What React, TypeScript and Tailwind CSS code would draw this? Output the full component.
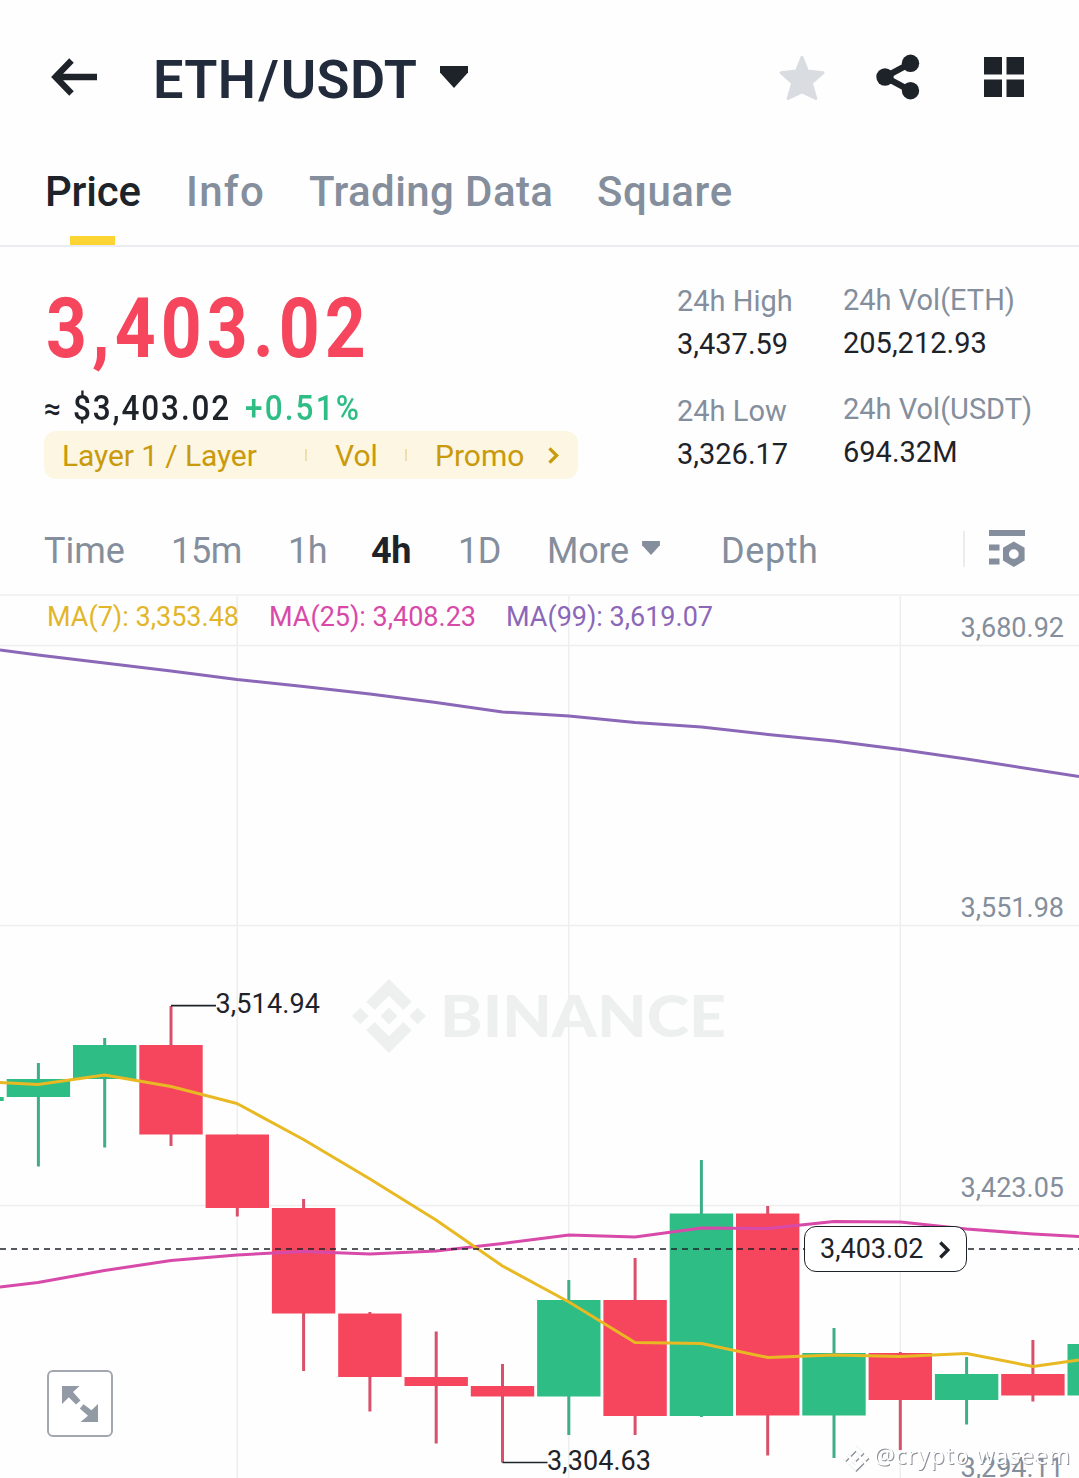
import React from "react";

const UP = "#2ebd85";
const DOWN = "#f6465d";
const STEP = 66.3;
const FIRST_X = 38.4;

type Candle = { up: boolean; high: number; top: number; bottom: number; low: number };

const candles: Candle[] = [
  { up: true, high: 1063, top: 1079, bottom: 1097, low: 1166.5 },
  { up: true, high: 1038, top: 1045, bottom: 1079, low: 1147.5 },
  { up: false, high: 1006, top: 1045, bottom: 1134.5, low: 1146 },
  { up: false, high: 1134.5, top: 1134.5, bottom: 1208, low: 1216.5 },
  { up: false, high: 1199, top: 1208, bottom: 1313.5, low: 1371 },
  { up: false, high: 1312, top: 1313.5, bottom: 1377, low: 1411.5 },
  { up: false, high: 1331.5, top: 1377, bottom: 1386, low: 1443.5 },
  { up: false, high: 1364, top: 1386, bottom: 1396.5, low: 1462.5 },
  { up: true, high: 1280, top: 1300, bottom: 1396.5, low: 1435 },
  { up: false, high: 1258, top: 1300, bottom: 1416, low: 1435 },
  { up: true, high: 1160, top: 1213.5, bottom: 1416, low: 1417 },
  { up: false, high: 1206, top: 1213.5, bottom: 1415.5, low: 1455.5 },
  { up: true, high: 1328, top: 1353, bottom: 1415.5, low: 1458 },
  { up: false, high: 1352, top: 1353, bottom: 1400, low: 1450 },
  { up: true, high: 1357, top: 1374, bottom: 1400, low: 1424.5 },
  { up: false, high: 1340, top: 1374, bottom: 1395.5, low: 1401.5 },
  { up: true, high: 1344, top: 1344, bottom: 1395.5, low: 1395.5 },
];

const ma7 =
  "0,1082.5 38,1084.5 104.5,1075 171,1086.5 237,1103.5 303.5,1139.5 370,1179 436,1220 502.5,1266 569,1302 635,1342.5 701.5,1343.5 768,1357.5 834,1355 900.5,1356.5 966.5,1353.5 1033,1366.5 1079,1360";
const ma25 =
  "0,1287 38,1282.5 104.5,1270.5 171,1260.5 237,1255 303.5,1251.5 370,1254 436,1251 502.5,1243.5 569,1235 635,1237 701.5,1228 768,1228.5 834,1221.5 900.5,1222 966.5,1229 1033,1234 1079,1236.5";
const ma99 =
  "0,650 38,655 104.5,663 171,671 237,679.5 303.5,686.5 370,694 436,702.5 502.5,712 569,716 635,722.5 701.5,727 768,734.5 834,741 900.5,749.5 966.5,759 1079,776.5";

function BinanceMark({ className }: { className?: string }) {
  return (
    <svg viewBox="0 0 126.6 126.6" className={className} fill="currentColor">
      <path d="M38.7 53.2 63.3 28.6l24.6 24.6 14.3-14.3L63.3 0 24.4 38.9zM0 63.3 14.3 49l14.3 14.3-14.3 14.3zM38.7 73.4 63.3 98l24.6-24.6 14.3 14.3-38.9 38.9-38.9-38.9zM98 63.3 112.3 49l14.3 14.3-14.3 14.3zM77.8 63.3 63.3 77.8 48.8 63.3l14.5-14.5z" />
    </svg>
  );
}

function Chevron({ className }: { className?: string }) {
  return (
    <svg viewBox="0 0 10 16" className={className} fill="none" stroke="currentColor" strokeWidth="3">
      <path d="M1.2 1.2 8 8l-6.8 6.8" />
    </svg>
  );
}

function Caret({ className }: { className?: string }) {
  return (
    <svg viewBox="0 0 28 22" className={className} fill="currentColor">
      <path d="M0 0h28v6.5L14 22 0 6.5z" />
    </svg>
  );
}

function Header() {
  return (
    <header className="flex h-[156px] items-center pb-[2px] text-[#1e2329]">
      <svg viewBox="0 0 46 38" className="ml-[51px] h-[38px] w-[46px]" fill="none" stroke="currentColor" strokeWidth="6.3">
        <path d="M20.5 2.5 4.5 19l16 16.5M4.500 19H46" />
      </svg>
      <h1 className="ml-[56px] mt-[5px] w-[287px] whitespace-nowrap text-[54px] font-semibold leading-none text-[#222b3b]">
        <span className="tracking-[0.3px]">ETH</span>
        <span className="mx-[2px]">/</span>
        <span className="tracking-[0.3px]">USDT</span>
      </h1>
      <Caret className="h-[22px] w-[28px]" />
      <svg viewBox="0 0 46 46" className="ml-[311px] mt-[2px] h-[46px] w-[46px] text-[#d9dce1]" fill="currentColor" stroke="currentColor" strokeWidth="3" strokeLinejoin="round">
        <path d="M23 2.200 28.500 16l15.500 1.700L32.300 28 36.800 43.500 23 37 9.200 43.500 13.700 28 2 17.700 17.500 16z" />
      </svg>
      <svg viewBox="0 0 44 46" className="ml-[51px] h-[46px] w-[44px]" fill="currentColor">
        <path d="M9 23 34 9.500M9 23l25 13.500" stroke="currentColor" strokeWidth="6.500" />
        <circle cx="9" cy="23" r="8.700" />
        <circle cx="34.500" cy="9.300" r="8.700" />
        <circle cx="34.500" cy="36.700" r="8.700" />
      </svg>
      <svg viewBox="0 0 40 40" className="ml-[64px] h-[40px] w-[40px]" fill="currentColor">
        <path d="M0 0h18v17.500H0zM22.500 0H40v17.500H22.500zM0 22.500h18V40H0zM22.500 22.500H40V40H22.500z" />
      </svg>
    </header>
  );
}

function Tabs() {
  return (
    <nav className="flex h-[91px] items-stretch whitespace-nowrap border-b-2 border-[#eaecef] pl-[45px] text-[42px] font-medium leading-[72px] text-[#848e9c]">
      <div className="relative w-[141px] tracking-[-0.2px] text-[#1e2329]">
        Price
        <span className="absolute bottom-0 left-[25px] h-[9px] w-[45px] bg-[#fcd535]" />
      </div>
      <div className="w-[123px] tracking-[1.3px]">Info</div>
      <div className="w-[288px] tracking-[0.4px]">Trading Data</div>
      <div className="tracking-[0.6px]">Square</div>
    </nav>
  );
}

function Stat({ label, value }: { label: string; value: string }) {
  return (
    <div className="whitespace-nowrap text-[29px]">
      <div className="h-[43px] leading-[34px] text-[#848e9c]">{label}</div>
      <div className="leading-[34px] text-[#1e2329]">{value}</div>
    </div>
  );
}

function Summary() {
  return (
    <section className="flex h-[272px] pl-[44px]">
      <div className="w-[633px] whitespace-nowrap">
        <div className="h-[140px] pl-[2px] pt-[34px]">
          <span className="inline-block origin-left scale-x-[0.85] text-[84px] font-bold leading-[96px] tracking-[6px] text-[#f6465d]">3,403.02</span>
        </div>
        <div className="flex h-[44px] items-center text-[35px] font-medium leading-[44px]">
          <span className="w-[29px] text-[30px] text-[#1e2329]">≈</span>
          <span className="w-[172px]">
            <span className="inline-block origin-left scale-x-[0.9] tracking-[2.1px] text-[#1e2329]">$3,403.02</span>
          </span>
          <span className="inline-block origin-left scale-x-[0.9] tracking-[2.4px] text-[#2ebd85]">+0.51%</span>
        </div>
        <div className="flex h-[48px] w-[534px] items-center rounded-xl bg-[#fdf6e2] pl-[18px] text-[30px] text-[#c99a0c]">
          <span className="w-[243px] tracking-[-0.1px]">Layer 1 / Layer</span>
          <span className="h-3 w-[2px] bg-[#eedfae]" />
          <span className="ml-[28px] w-[70px]">Vol</span>
          <span className="h-3 w-[2px] bg-[#eedfae]" />
          <span className="ml-[28px] w-[113px]">Promo</span>
          <Chevron className="h-[17px] w-[11px]" />
        </div>
      </div>
      <div className="flex w-[166px] flex-col gap-[33px] pt-[37px]">
        <Stat label="24h High" value="3,437.59" />
        <Stat label="24h Low" value="3,326.17" />
      </div>
      <div className="flex flex-col gap-[32px] pt-[36px]">
        <Stat label="24h Vol(ETH)" value="205,212.93" />
        <Stat label="24h Vol(USDT)" value="694.32M" />
      </div>
    </section>
  );
}

function Intervals() {
  return (
    <nav className="flex h-[77px] items-center whitespace-nowrap border-b-2 border-[#f0f2f4] pl-[44px] pb-[12px] text-[36px] leading-none text-[#848e9c]">
      <span className="w-[127px]">Time</span>
      <span className="w-[117px] tracking-[-0.3px]">15m</span>
      <span className="w-[83px] tracking-[-0.5px]">1h</span>
      <span className="w-[87px] font-bold tracking-[-0.5px] text-[#1e2329]">4h</span>
      <span className="w-[89px] tracking-[-0.5px]">1D</span>
      <span className="w-[95px] tracking-[-0.3px]">More</span>
      <Caret className="mb-[5px] h-[14px] w-[18px]" />
      <span className="ml-[61px] w-[242px] tracking-[0.6px]">Depth</span>
      <span className="mb-[3px] h-9 w-[2px] bg-[#eaecef]" />
      <svg viewBox="0 0 36 38" className="mb-[5px] ml-[24px] h-[38px] w-[36px]" fill="currentColor">
        <path d="M0 1h36v6H0zM0 15.500h10.500v6H0zM0 29.500h10.500v6H0z" />
        <path fillRule="evenodd" d="M24.800 12.500 35.600 18.800v12.800L24.800 38 14 31.600V18.800zM24.800 20.200a4.900 4.900 0 1 0 0 9.800 4.900 4.900 0 0 0 0-9.800z" />
      </svg>
    </nav>
  );
}

function Chart() {
  return (
    <section className="relative h-[882px] overflow-hidden">
      <svg viewBox="0 596 1079 882" className="block h-[882px] w-[1079px]" fontFamily="Roboto" fontSize="27">
        <g stroke="#eeeeef" strokeWidth="1.5">
          <path d="M0 645.500H1079M0 925.500H1079M0 1205.500H1079M237.200 596V1478M568.700 596V1478M900.300 596V1478" />
        </g>

        <g className="text-[#eef0f0]">
          <svg x="352" y="979" width="74" height="74">
            <BinanceMark />
          </svg>
          <text x="440" y="1037" fill="currentColor" fontFamily="Lato" fontWeight="900" fontSize="57" textLength="286" lengthAdjust="spacingAndGlyphs">
            BINANCE
          </text>
        </g>

        <g fill="#848e9c">
          <text x="960.500" y="637" textLength="103.500">3,680.92</text>
          <text x="960.500" y="917" textLength="103.500">3,551.98</text>
          <text x="960.500" y="1197" textLength="103.500">3,423.05</text>
          <text x="960.500" y="1477" textLength="103.500">3,294.11</text>
        </g>

        <rect x="0" y="1097" width="3.700" height="4" fill={UP} />
        {candles.map((c, i) => {
          const x = FIRST_X + i * STEP;
          return (
            <g key={i} fill={c.up ? UP : DOWN}>
              <rect x={x - 1.5} y={c.high} width="3" height={c.low - c.high} fill={c.up ? "#3fae86" : "#d9506a"} />
              <rect x={x - 31.7} y={c.top} width="63.400" height={c.bottom - c.top} />
            </g>
          );
        })}

        <g fill="none" strokeWidth="3" strokeLinejoin="round">
          <polyline points={ma99} stroke="#8b67b8" />
          <polyline points={ma25} stroke="#d84aa9" />
          <polyline points={ma7} stroke="#e8b923" />
        </g>

        <path d="M0 1249H1079" stroke="#1e2329" strokeWidth="1.500" strokeDasharray="6 5" />
        <path d="M171 1005.700H216M502.500 1462.500H547.500" stroke="#1e2329" strokeWidth="1.700" />
        <g fill="#1e2329">
          <text x="215.500" y="1013" textLength="104.500">3,514.94</text>
          <text x="547" y="1470" textLength="104">3,304.63</text>
        </g>

        <text x="47" y="626" fill="#e2b62a" textLength="192">MA(7): 3,353.48</text>
        <text x="269" y="626" fill="#d84aa9" textLength="207">MA(25): 3,408.23</text>
        <text x="506" y="626" fill="#8b67b8" textLength="207">MA(99): 3,619.07</text>

        <g className="text-white drop-shadow-[1px_1px_0.5px_#8b8f96]">
          <svg x="842" y="1445" width="27" height="26">
            <BinanceMark />
          </svg>
          <text x="874" y="1464" fill="currentColor" fontFamily="Noto Sans" fontSize="23" textLength="196">
            @crypto waseem
          </text>
        </g>
      </svg>

      <div className="absolute left-[804px] top-[630px] flex h-[46px] w-[163px] items-center rounded-[12px] border-[1.5px] border-[#1e2329] bg-white pl-[15px] pt-px text-[27px] text-[#1e2329]">
        <span className="w-[119px]">3,403.02</span>
        <Chevron className="h-[18px] w-[11px]" />
      </div>

      <button className="absolute left-[47px] top-[774px] flex h-[67px] w-[66px] items-center justify-center rounded-md border-2 border-[#a3a8b0] bg-white text-[#929aa5]">
        <svg viewBox="0 0 36 36" className="h-[36px] w-[36px]" fill="currentColor">
          <path d="M0 0h17.500L11 6l7.500 8.500-4.500 4L6.800 11.200 0 18zM36 36H18.500L26 29.700 17.800 22.500l3.700-4.200 8 6L36 18z" />
        </svg>
      </button>
    </section>
  );
}

export default function App() {
  return (
    <main className="h-[1478px] w-[1079px] overflow-hidden bg-[#fefefe] font-[Roboto,sans-serif]">
      <Header />
      <Tabs />
      <Summary />
      <Intervals />
      <Chart />
    </main>
  );
}
